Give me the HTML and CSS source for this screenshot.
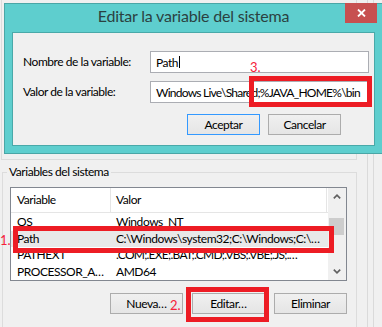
FILE: index.html
```html
<!DOCTYPE html>
<html lang="es">
<head>
<meta charset="utf-8">
<title>Editar la variable del sistema</title>
<link rel="stylesheet" href="styles.css">
</head>
<body>
<div class="screen">
  <div class="outer">
    <div class="tab">
      <div class="user-box"></div>
      <fieldset class="group">
        <legend>Variables del sistema</legend>
        <div class="list">
          <div class="table">
            <div class="hdr"><div class="c1">Variable</div><div class="c2">Valor</div></div>
            <div class="rows">
              <div class="row"><span class="c1">OS</span><span class="c2">Windows_NT</span></div>
              <div class="row sel"><span class="c1">Path</span><span class="c2">C:\Windows\system32;C:\Windows;C:\…</span></div>
              <div class="row"><span class="c1">PATHEXT</span><span class="c2 tight">.COM;.EXE;.BAT;.CMD;.VBS;.VBE;.JS;.…</span></div>
              <div class="row"><span class="c1">PROCESSOR_A…</span><span class="c2">AMD64</span></div>
            </div>
          </div>
          <div class="sb">
            <div class="sb-btn"><svg width="8" height="5" viewBox="0 0 8 5"><polyline points="0.8,4.3 4,1.2 7.2,4.3" fill="none" stroke="#606060" stroke-width="1.7"/></svg></div>
            <div class="sb-track"><div class="thumb"></div></div>
            <div class="sb-btn"><svg width="8" height="5" viewBox="0 0 8 5"><polyline points="0.8,0.7 4,3.8 7.2,0.7" fill="none" stroke="#606060" stroke-width="1.7"/></svg></div>
          </div>
        </div>
        <div class="btns">
          <button class="btn">Nueva…</button>
          <button class="btn">Editar…</button>
          <button class="btn">Eliminar</button>
        </div>
      </fieldset>
    </div>
  </div>

  <div class="dialog">
    <div class="titlebar">Editar la variable del sistema</div>
    <div class="close"><svg width="9" height="8" viewBox="0 0 9 8"><path d="M1 0.5 L8 7.5 M8 0.5 L1 7.5" stroke="#fff" stroke-width="1.8"/></svg></div>
    <div class="client">
      <div class="form">
        <label>Nombre de la variable:</label>
        <div class="field">Path<span class="caret"></span></div>
        <label>Valor de la variable:</label>
        <div class="field value"><span>Windows Live\Shared;%JAVA_HOME%\bin</span></div>
      </div>
      <div class="actions">
        <button class="btn default">Aceptar</button>
        <button class="btn">Cancelar</button>
      </div>
    </div>
  </div>

  <div class="mark box3"></div><span class="num n3">3.</span>
  <div class="mark box1"></div><span class="num n1">1.</span>
  <div class="mark box2"></div><span class="num n2">2.</span>
</div>
</body>
</html>
```

FILE: styles.css
```css
* { box-sizing: border-box; }
body {
  margin: 0;
  font-family: Lato, "Noto Sans", sans-serif;
  font-size: 12px;
  letter-spacing: -0.45px;
  color: #000;
  background: #f0f0f0;
}
.screen {
  position: relative;
  width: 382px;
  height: 327px;
  overflow: hidden;
  background: #f0f0f0;
}
.outer {
  width: 374px;
  height: 327px;
  border-right: 1px solid #dadada;
}
.tab {
  width: 368px;
  height: 100%;
  border-right: 1px solid #dadada;
}
.user-box {
  margin-left: 1px;
  width: 356px;
  height: 160px;
  border: 1px solid #dcdcdc;
  border-top: none;
}
.group {
  margin: 4px 0 0 2px;
  width: 355px;
  height: 163px;
  padding: 7px 0 0 7px;
  border: 1px solid #dcdcdc;
  border-bottom: none;
  min-width: 0;
}
.group legend {
  padding: 0 2px;
  margin-left: -3px;
  line-height: 16px;
}
.list {
  display: grid;
  grid-template-columns: 1fr 18px;
  width: 337px;
  height: 94px;
  border: 1px solid #828790;
  background: #fff;
}
.table { overflow: hidden; }
.hdr {
  display: grid;
  grid-template-columns: 100px 216px;
  height: 25px;
  line-height: 24px;
  border-bottom: 1px solid #e5e5e5;
}
.hdr div { border-right: 1px solid #e5e5e5; }
.c1 { padding-left: 6px; overflow: hidden; }
.c2 { padding-left: 5px; overflow: hidden; }
.c2.tight { letter-spacing: -0.75px; }
.rows { padding-top: 1px; }
.row {
  display: grid;
  grid-template-columns: 100px 216px;
  height: 16.7px;
  line-height: 16.7px;
  white-space: nowrap;
}
.row.sel { background: #e8e8e8; }
.sb {
  display: flex;
  flex-direction: column;
  background: #f0f0f0;
}
.sb-btn {
  height: 17px;
  display: flex;
  align-items: center;
  justify-content: center;
}
.sb-track {
  flex: 1;
  padding: 13px 0 0 1px;
}
.thumb {
  width: 15px;
  height: 17px;
  background: #cdcdcd;
}
.btns {
  display: flex;
  gap: 9px;
  margin: 12px 0 0 100px;
}
.btn {
  width: 73px;
  height: 21px;
  padding: 0;
  border: 1px solid #acacac;
  background: linear-gradient(#f0f0f0, #e5e5e5);
  font: inherit;
  letter-spacing: inherit;
  color: #000;
}
.btn.default { border-color: #3399ff; }

.dialog {
  position: absolute;
  left: 4px;
  top: 3px;
  width: 379px;
  height: 151px;
  border: 1px solid #4aa6a6;
  background: #5ecece;
  padding: 0 7px 7px;
}
.titlebar {
  height: 28px;
  line-height: 24px;
  text-align: center;
  font-size: 16px;
  letter-spacing: -0.2px;
  color: #2b4141;
}
.close {
  position: absolute;
  left: 340px;
  top: -1px;
  width: 32px;
  height: 20px;
  background: #c75050;
  display: flex;
  align-items: center;
  justify-content: center;
}
.client {
  height: 114px;
  border: 1px solid #49a9a9;
  background: #f0f0f0;
  padding: 18px 5px 10px 10px;
}
.form {
  display: grid;
  grid-template-columns: 127px 219px;
  grid-auto-rows: 22px;
  row-gap: 8px;
  align-items: center;
}
.form label { line-height: 22px; white-space: nowrap; }
.field {
  height: 22px;
  border: 1px solid #abadb3;
  background: #fff;
  padding: 0 5px;
  display: flex;
  align-items: center;
  overflow: hidden;
  white-space: nowrap;
}
.field.value { letter-spacing: -0.75px; }
.caret {
  width: 1px;
  height: 12px;
  margin-left: 1px;
  background: #000;
}
.actions {
  display: flex;
  justify-content: flex-end;
  gap: 8px;
  margin-top: 11px;
  padding-right: 28px;
}

.mark {
  position: absolute;
  border: 5px solid #ed1c24;
}
.box3 { left: 249px; top: 76px; width: 123px; height: 31px; }
.box1 { left: 13px; top: 226px; width: 321px; height: 27px; }
.box2 { left: 186px; top: 287px; width: 83px; height: 35px; }
.num {
  position: absolute;
  color: #f5213a;
  font-size: 13px;
  line-height: 14px;
  letter-spacing: 0;
}
.n3 { left: 250px; top: 60px; }
.n1 { left: 0; top: 233px; }
.n2 { left: 170px; top: 298px; }
```
